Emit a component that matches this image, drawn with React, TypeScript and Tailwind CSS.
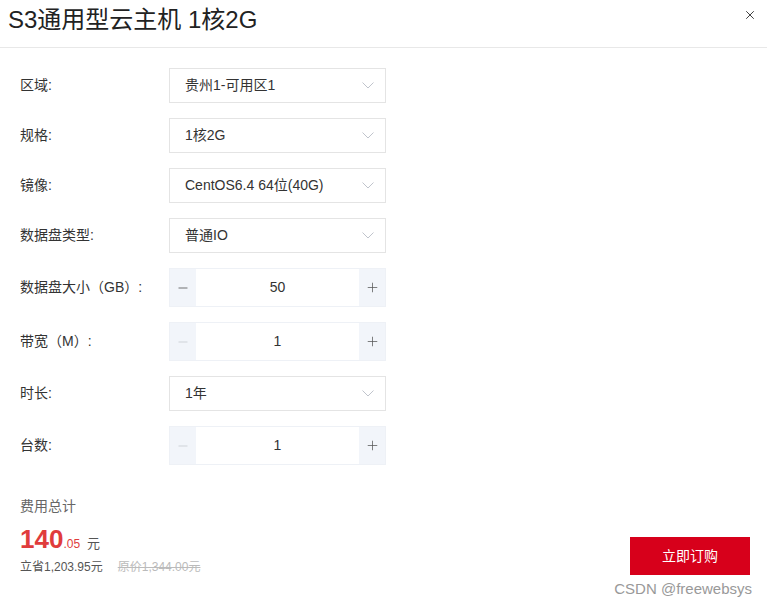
import { Minus, Plus, X } from 'lucide-react'

const font = { fontFamily: '"Liberation Sans", "Noto Sans CJK SC", sans-serif' }

type Row =
  | { label: string; kind: 'select'; value: string }
  | { label: string; kind: 'number'; value: number; min: boolean }

const rows: Row[] = [
  { label: '区域:', kind: 'select', value: '贵州1-可用区1' },
  { label: '规格:', kind: 'select', value: '1核2G' },
  { label: '镜像:', kind: 'select', value: 'CentOS6.4 64位(40G)' },
  { label: '数据盘类型:', kind: 'select', value: '普通IO' },
  { label: '数据盘大小（GB）:', kind: 'number', value: 50, min: false },
  { label: '带宽（M）:', kind: 'number', value: 1, min: true },
  { label: '时长:', kind: 'select', value: '1年' },
  { label: '台数:', kind: 'number', value: 1, min: true },
]

function Chevron() {
  return (
    <svg width="12" height="7" viewBox="0 0 12 7" fill="none" className="text-[#c0c4cc]">
      <path d="M0.5 0.5L6 6L11.5 0.5" stroke="currentColor" strokeWidth="1" />
    </svg>
  )
}

function SelectBox({ value }: { value: string }) {
  return (
    <div className="flex h-[35px] w-[217px] items-center justify-between border border-[#e4e4e4] bg-white pl-[15px] pr-[11px] text-[14px] text-[#333]">
      <span>{value}</span>
      <Chevron />
    </div>
  )
}

function Stepper({ value, min }: { value: number; min: boolean }) {
  return (
    <div className="flex h-[39px] w-[217px] items-stretch border border-[#eef1f6] bg-white text-[14px] text-[#333]">
      <div className="flex w-[26px] items-center justify-center bg-[#f2f5fa]">
        <Minus size={14} strokeWidth={1.4} className={min ? 'text-[#c8cbd0]' : 'text-[#555]'} />
      </div>
      <div className="flex flex-1 items-center justify-center">{value}</div>
      <div className="flex w-[26px] items-center justify-center bg-[#f2f5fa]">
        <Plus size={15} strokeWidth={1.2} className="text-[#555]" />
      </div>
    </div>
  )
}

export default function App() {
  return (
    <div className="h-[605px] w-[767px] bg-white" style={font}>
      <div className="flex h-[48px] items-start justify-between border-b border-[#e8e8e8] pl-[8px] pr-[10px]">
        <h1 className="pt-[4px] text-[24px] leading-[32px] text-[#222]">S3通用型云主机 1核2G</h1>
        <X size={14} strokeWidth={1.6} className="mt-[8px] text-[#333]" />
      </div>

      <div className="px-[20px] pt-[20px]">
        {rows.map((r) => (
          <div key={r.label} className="mb-[15px] flex items-center">
            <div className="w-[149px] text-[14px] text-[#333]">{r.label}</div>
            {r.kind === 'select' ? <SelectBox value={r.value} /> : <Stepper value={r.value} min={r.min} />}
          </div>
        ))}
      </div>

      <div className="flex items-end justify-between pl-[20px] pr-[17px] pt-[16px]">
        <div>
          <div className="text-[14px] leading-[20px] text-[#666]">费用总计</div>
          <div className="mt-[8px] flex items-baseline text-[#e03c3c]">
            <span className="text-[26px] font-bold leading-[30px]">140</span>
            <span className="text-[12px]">.05</span>
            <span className="ml-[7px] text-[13px] text-[#555]">元</span>
          </div>
          <div className="mt-[5px] flex text-[12px] leading-[16px]">
            <span className="text-[#555]">立省1,203.95元</span>
            <span className="ml-[15px] text-[#bbb] line-through">原价1,344.00元</span>
          </div>
        </div>
        <button className="h-[38px] w-[120px] bg-[#d7001b] text-[14px] text-white">立即订购</button>
      </div>
      <div className="flex justify-end pr-[15px] pt-[4px] text-[15px] leading-[20px] text-[#999]">CSDN @freewebsys</div>
    </div>
  )
}
